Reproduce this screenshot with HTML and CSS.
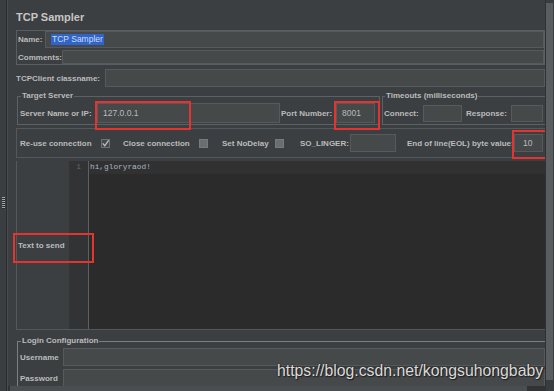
FILE: index.html
```html
<!DOCTYPE html>
<html lang="en">
<head>
    <meta charset="UTF-8">
    <title>TCP Sampler</title>
    <link rel="stylesheet" href="styles.css">
</head>
<body>
<div class="window">
    <div class="side"><span class="grip"></span></div>

    <div class="pane">
        <div class="content">
            <h1 class="title">TCP Sampler</h1>

            <div class="namebox">
                <div class="row">
                    <label class="lbl-name">Name:</label>
                    <div class="field name-field"><span class="sel">TCP Sampler</span></div>
                </div>
                <div class="row">
                    <label class="lbl-comments">Comments:</label>
                    <div class="field comments-field"></div>
                </div>
            </div>

            <div class="row classname">
                <label class="lbl-class">TCPClient classname:</label>
                <div class="field tall"></div>
            </div>

            <div class="servers">
                <fieldset class="group target">
                    <legend>Target Server</legend>
                    <label class="lbl-server">Server Name or IP:</label>
                    <div class="field server hl">127.0.0.1</div>
                    <label class="lbl-port">Port Number:</label>
                    <div class="field port hl">8001</div>
                </fieldset>
                <fieldset class="group timeouts">
                    <legend>Timeouts (milliseconds)</legend>
                    <label class="lbl-connect">Connect:</label>
                    <div class="field small connect"></div>
                    <label class="lbl-response">Response:</label>
                    <div class="field small response"></div>
                </fieldset>
            </div>

            <div class="options">
                <label class="lbl-reuse">Re-use connection</label>
                <span class="check on">
                    <svg width="9" height="9" viewBox="0 0 9 9"><path d="M1.8 4.4 L3.8 6.8 L7.6 1.4" fill="none" stroke="#c4c4c4" stroke-width="1.3"/></svg>
                </span>
                <label class="lbl-close">Close connection</label>
                <span class="check"></span>
                <label class="lbl-nodelay">Set NoDelay</label>
                <span class="check"></span>
                <label class="lbl-linger">SO_LINGER:</label>
                <div class="field linger"></div>
                <label class="lbl-eol">End of line(EOL) byte value:</label>
                <div class="field eol hl">10</div>
            </div>

            <div class="textpanel">
                <div class="textlabel"><span class="hl">Text to send</span></div>
                <div class="gutter"><div class="ln">1</div></div>
                <div class="editor"><div class="line">hi,gloryraod!</div></div>
            </div>

            <fieldset class="login">
                <legend>Login Configuration</legend>
                <div class="row">
                    <label class="lbl-login">Username</label>
                    <div class="field tall"></div>
                </div>
                <div class="row">
                    <label class="lbl-login">Password</label>
                    <div class="field tall"></div>
                </div>
            </fieldset>
        </div>
        <div class="hbar"><span class="thumb"></span></div>
    </div>

    <div class="vscroll"><span class="thumb"></span></div>

    <div class="watermark">https://blog.csdn.net/kongsuhongbaby</div>
</div>
</body>
</html>
```

FILE: styles.css
```css
* {
    box-sizing: border-box;
}

body {
    margin: 0;
    background-color: #3c3f41;
    font-family: "Liberation Sans", Arial, sans-serif;
    font-size: 8px;
    font-weight: bold;
    color: #bbbbbb;
}

.window {
    position: relative;
    width: 554px;
    height: 391px;
    display: flex;
    overflow: hidden;
    background-color: #3c3f41;
}

/* left splitter */
.side {
    width: 8px;
    flex: none;
    background-color: #3b3e40;
    border-right: 1px solid #484b4d;
    box-shadow: inset -1px 0 0 #2b2d2f;
    padding-top: 197px;
}

.grip {
    display: block;
    width: 3px;
    height: 12px;
    margin-left: 2px;
    background: repeating-linear-gradient(to bottom, #a4a6a8 0 1px, #2b2d2f 1px 2px);
}

.pane {
    flex: 1;
    display: flex;
    flex-direction: column;
    min-width: 0;
}

.content {
    flex: 1;
    overflow: hidden;
    padding-left: 8px;
}

.hbar {
    height: 5px;
    flex: none;
    background-color: #313335;
}

.hbar .thumb {
    display: block;
    width: 517px;
    height: 5px;
    margin-left: 2px;
    background-color: #4b4e50;
}

.vscroll {
    width: 9px;
    flex: none;
    border-left: 1px solid #2f3133;
    background-color: #3a3d3f;
    padding: 3px 1px 11px 0;
}

.vscroll .thumb {
    display: block;
    height: 100%;
    background-color: #5a5d5f;
}

.title {
    margin: 0;
    padding-top: 10px;
    height: 30px;
    font-size: 11px;
    line-height: 14px;
    color: #c6c6c6;
}

/* form rows */
.row {
    display: flex;
    align-items: center;
}

label {
    flex: none;
    white-space: nowrap;
}

.field {
    position: relative;
    flex: none;
    height: 17px;
    background-color: #45494a;
    border: 1px solid #575a5c;
    display: flex;
    align-items: center;
    padding-left: 5px;
    font-weight: normal;
    font-size: 8.5px;
    color: #bbbbbb;
}

.row .field {
    flex: 1;
}

.field.tall {
    height: 18px;
}

.namebox {
    border: 1px solid #5b5e60;
    display: flex;
    flex-direction: column;
    gap: 2px;
}

.lbl-name {
    width: 28px;
    padding-left: 1px;
}

.lbl-comments {
    width: 45px;
    padding-left: 1px;
}

.comments-field {
    height: 14px;
}

.sel {
    background-color: #2f65ca;
    color: #cfdcf2;
    height: 11px;
    line-height: 11px;
    padding: 0 1px;
}

.classname {
    margin-top: 4px;
}

.lbl-class {
    width: 89px;
}

/* Target Server / Timeouts */
.servers {
    display: flex;
    margin-top: 4px;
}

.group {
    margin: 0;
    padding: 2px 2px 1px 2px;
    border: 1px solid #5e6163;
    min-width: 0;
    display: flex;
    align-items: center;
}

.group legend,
.login legend {
    padding: 0 1px;
    line-height: 10px;
    font-size: 8px;
}

.target {
    margin-left: 1px;
    width: 363px;
}

.target legend {
    margin-left: 1px;
}

.lbl-server {
    width: 77px;
}

.server {
    width: 183px;
    height: 20px;
}

.lbl-port {
    width: 56px;
    padding-left: 1px;
}

.port {
    width: 39px;
    height: 20px;
}

.timeouts {
    margin-left: 2px;
    flex: 1;
    padding-left: 1px;
    border-right: none;
}

.timeouts legend {
    margin-left: 1px;
}

.lbl-connect {
    width: 39px;
}

.small {
    height: 17px;
}

.connect {
    width: 39px;
}

.lbl-response {
    width: 49px;
    padding-left: 4px;
}

.response {
    flex: 1;
}

/* checkbox row */
.options {
    margin-top: 3px;
    height: 30px;
    border: 1px solid #55585a;
    border-right: none;
    display: flex;
    align-items: center;
    padding-left: 3px;
}

.check {
    flex: none;
    width: 9px;
    height: 9px;
    background-color: #6b6e70;
    border: 1px solid #77797b;
}

.check.on {
    background-color: #45494b;
    border-color: #6f7274;
    display: flex;
}

.check svg {
    margin: -1px;
}

.lbl-reuse {
    width: 81px;
}

.lbl-close {
    width: 89px;
    padding-left: 13px;
}

.lbl-nodelay {
    width: 67px;
    padding-left: 14px;
}

.lbl-linger {
    width: 66px;
    padding-left: 16px;
}

.linger {
    width: 46px;
    height: 18px;
}

.lbl-eol {
    width: 118px;
    padding-left: 11px;
}

.eol {
    width: 29px;
    height: 18px;
    padding-left: 8px;
}

/* red highlight boxes */
.hl::after {
    content: "";
    position: absolute;
    border: 2px solid #e5332f;
}

.server::after {
    left: -3px;
    top: -3px;
    width: 92px;
    height: 25px;
}

.port::after {
    left: -3px;
    top: -3px;
    width: 42px;
    height: 25px;
}

.eol::after {
    left: -3px;
    top: -5px;
    width: 33px;
    height: 25px;
}

/* text to send */
.textpanel {
    margin-top: 3px;
    height: 169px;
    display: flex;
    border-bottom: 1px solid #55585a;
}

.textlabel {
    width: 53px;
    flex: none;
    border-left: 1px solid #55585a;
    display: flex;
    align-items: center;
    padding-left: 1px;
    padding-top: 1px;
}

.textlabel .hl {
    position: relative;
    display: block;
    line-height: 10px;
}

.textlabel .hl::after {
    left: -5px;
    top: -8px;
    width: 77px;
    height: 26px;
}

.gutter {
    width: 20px;
    flex: none;
    background-color: #313335;
    border-right: 1px solid #5f6062;
}

.ln {
    height: 13px;
    line-height: 13px;
    text-align: right;
    padding-right: 7px;
    font-family: "Liberation Mono", "DejaVu Sans Mono", monospace;
    font-weight: normal;
    font-size: 7.8px;
    color: #65686b;
}

.editor {
    flex: 1;
    background-color: #2b2b2b;
}

.line {
    height: 13px;
    line-height: 13px;
    padding-left: 1px;
    background-color: #313131;
    font-family: "Liberation Mono", "DejaVu Sans Mono", monospace;
    font-weight: normal;
    font-size: 7.8px;
    color: #a9b7c6;
}

/* login */
.login {
    margin: 6px 0 0 1px;
    padding: 2px 0 0 1px;
    border: 1px solid #7c7f82;
    border-right: none;
    display: flex;
    flex-direction: column;
    gap: 3px;
    min-width: 0;
}

.login legend {
    margin-left: 2px;
}

.lbl-login {
    width: 44px;
    padding-left: 1px;
}

.watermark {
    position: absolute;
    left: 277px;
    top: 362px;
    font-size: 15.8px;
    line-height: 18px;
    font-weight: normal;
    color: #dadada;
    text-shadow: 0 0 2px #1e1e1e, 1px 1px 1px #1e1e1e;
    white-space: nowrap;
}
```
